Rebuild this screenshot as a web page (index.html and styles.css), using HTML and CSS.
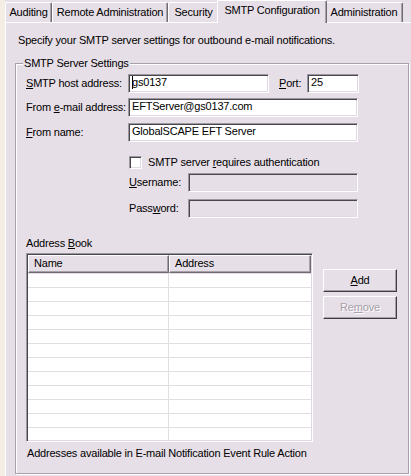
FILE: index.html
```html
<!DOCTYPE html>
<html>
<head>
<meta charset="utf-8">
<link rel="stylesheet" href="styles.css">
</head>
<body>
<div class="window">
  <div class="strip"></div>
  <div class="tabctl">
    <div class="tabs">
      <div class="tab t1">Auditing</div>
      <div class="tab t2">Remote Administration</div>
      <div class="tab t3">Security</div>
      <div class="tab sel">SMTP Configuration</div>
      <div class="tab t5">Administration</div>
    </div>
    <div class="panel">
      <div class="intro">Specify your SMTP server settings for outbound e-mail notifications.</div>
      <div class="group">
        <div class="legend">SMTP Server Settings</div>
        <div class="row r1">
          <span class="lbl"><u>S</u>MTP host address:</span>
          <div class="edit host"><span class="caret"></span>gs0137</div>
          <span class="portlbl"><u>P</u>ort:</span>
          <div class="edit port">25</div>
        </div>
        <div class="row r2">
          <span class="lbl">From <u>e</u>-mail address:</span>
          <div class="edit wide">EFTServer@gs0137.com</div>
        </div>
        <div class="row r3">
          <span class="lbl"><u>F</u>rom name:</span>
          <div class="edit wide">GlobalSCAPE EFT Server</div>
        </div>
        <div class="checkrow">
          <span class="check"></span>
          <span class="checklbl">SMTP server <u>r</u>equires authentication</span>
        </div>
        <div class="row sub r4">
          <span class="sublbl"><u>U</u>sername:</span>
          <div class="edit off"></div>
        </div>
        <div class="row sub r5">
          <span class="sublbl">Pass<u>w</u>ord:</span>
          <div class="edit off"></div>
        </div>
        <div class="abook">Address <u>B</u>ook</div>
        <div class="listarea">
          <div class="list">
            <div class="lhead">
              <div class="hcell hname">Name</div>
              <div class="hcell haddr">Address</div>
            </div>
            <div class="lrow"><div class="c1"></div><div class="c2"></div></div>
            <div class="lrow"><div class="c1"></div><div class="c2"></div></div>
            <div class="lrow"><div class="c1"></div><div class="c2"></div></div>
            <div class="lrow"><div class="c1"></div><div class="c2"></div></div>
            <div class="lrow"><div class="c1"></div><div class="c2"></div></div>
            <div class="lrow"><div class="c1"></div><div class="c2"></div></div>
            <div class="lrow"><div class="c1"></div><div class="c2"></div></div>
            <div class="lrow"><div class="c1"></div><div class="c2"></div></div>
            <div class="lrow"><div class="c1"></div><div class="c2"></div></div>
            <div class="lrow"><div class="c1"></div><div class="c2"></div></div>
            <div class="lrow"><div class="c1"></div><div class="c2"></div></div>
            <div class="lrow"><div class="c1"></div><div class="c2"></div></div>
          </div>
          <div class="buttons">
            <div class="btn"><u>A</u>dd</div>
            <div class="btn disabled">Re<u>m</u>ove</div>
          </div>
        </div>
        <div class="footer">Addresses available in E-mail Notification Event Rule Action</div>
      </div>
    </div>
  </div>
</div>
</body>
</html>
```
FILE: styles.css
```css
html, body {
  margin: 0;
  padding: 0;
}
body {
  background: #e7dfe7;
  font-family: "Liberation Sans", Arial, sans-serif;
  font-size: 11px;
  letter-spacing: -0.2px;
  line-height: 13px;
  color: #000;
  overflow: hidden;
}
u { text-decoration: underline; text-underline-offset: 1px; }

.window {
  display: flex;
  height: 476px;
  width: 411px;
  overflow: hidden;
}
.strip {
  width: 5px;
  flex: none;
  background: #f3ede3;
}
.tabctl {
  flex: 1;
  display: flex;
  flex-direction: column;
  min-width: 0;
}
.tabs {
  display: flex;
  align-items: flex-end;
  height: 22px;
  flex: none;
}
.tab {
  box-sizing: border-box;
  height: 20px;
  line-height: 18px;
  text-align: center;
  white-space: nowrap;
  border-top: 1px solid #fff;
  border-left: 1px solid #fff;
  border-right: 1px solid #6f6a70;
  border-radius: 2px 2px 0 0;
  box-shadow: inset -1px 0 0 #a7a1a9;
  background: #e7dfe7;
  flex: none;
}
.t1 { width: 47px; }
.t2 { width: 116px; }
.t3 { width: 51px; }
.t5 { width: 78px; }
.sel {
  width: 110px;
  height: 23px;
  line-height: 19px;
  margin: 0 -2px -1px -2px;
  position: relative;
  z-index: 1;
  padding-bottom: 3px;
}

.panel {
  flex: 1;
  border-top: 1px solid #fff;
  border-left: 1px solid #fff;
  padding-top: 11px;
}
.intro {
  line-height: 13px;
  padding-left: 12px;
  white-space: nowrap;
}
.group {
  box-sizing: border-box;
  margin: 16px 0 0 9px;
  width: 394px;
  height: 411px;
  border: 1px solid #a7a1a9;
  box-shadow: inset 1px 1px 0 #fff, 1px 1px 0 #fff;
  padding-left: 10px;
}
.legend {
  width: fit-content;
  line-height: 13px;
  margin: -7px 0 0 -3px;
  padding: 0 1px;
  background: #e7dfe7;
}
.row {
  display: flex;
  align-items: center;
  height: 19px;
}
.r1 { margin-top: 4px; }
.r2 { margin-top: 5px; }
.r3 { margin-top: 6px; }
.lbl {
  width: 102px;
  flex: none;
  white-space: nowrap;
}
.portlbl {
  width: 28px;
  margin-left: 10px;
  flex: none;
}
.edit {
  box-sizing: border-box;
  height: 19px;
  line-height: 15px;
  padding-left: 3px;
  background: #fff;
  border-top: 1px solid #9d97a0;
  border-left: 1px solid #9d97a0;
  border-right: 1px solid #fff;
  border-bottom: 1px solid #fff;
  box-shadow: inset 1px 1px 0 #4a464d, inset -1px -1px 0 #e0d8e2;
  white-space: nowrap;
  flex: none;
}
.host { width: 141px; }
.port { width: 52px; }
.wide { width: 230px; }
.off { width: 170px; background: #e7dfe7; }
.caret {
  display: inline-block;
  width: 1px;
  height: 13px;
  background: #000;
  vertical-align: -3px;
  margin-right: -1px;
}

.checkrow {
  display: flex;
  align-items: center;
  height: 13px;
  margin-top: 14px;
  padding-left: 103px;
}
.check {
  box-sizing: border-box;
  width: 13px;
  height: 13px;
  background: #fff;
  border-top: 1px solid #9d97a0;
  border-left: 1px solid #9d97a0;
  border-right: 1px solid #fff;
  border-bottom: 1px solid #fff;
  box-shadow: inset 1px 1px 0 #4a464d, inset -1px -1px 0 #e0d8e2;
  flex: none;
}
.checklbl {
  margin-left: 6px;
  white-space: nowrap;
}
.sub { padding-left: 103px; }
.r4 { margin-top: 4px; }
.r5 { margin-top: 7px; }
.sublbl {
  width: 59px;
  flex: none;
  white-space: nowrap;
}

.abook {
  line-height: 13px;
  margin-top: 19px;
}
.listarea {
  display: flex;
  margin-top: 3px;
}
.list {
  box-sizing: border-box;
  width: 287px;
  height: 189px;
  background: #fff;
  border-top: 1px solid #9d97a0;
  border-left: 1px solid #9d97a0;
  border-right: 1px solid #fff;
  border-bottom: 1px solid #fff;
  box-shadow: inset 1px 1px 0 #4a464d, inset -1px -1px 0 #e0d8e2;
  padding: 1px 1px 0 1px;
  overflow: hidden;
  flex: none;
}
.lhead {
  display: flex;
  height: 18px;
}
.hcell {
  box-sizing: border-box;
  height: 18px;
  line-height: 15px;
  padding-left: 5px;
  background: #e7dfe7;
  border-top: 1px solid #fff;
  border-left: 1px solid #fff;
  border-right: 1px solid #6f6a70;
  border-bottom: 1px solid #6f6a70;
  box-shadow: inset -1px -1px 0 #a7a1a9;
}
.hname { width: 141px; }
.haddr { flex: 1; }
.lrow {
  display: flex;
  height: 14px;
  box-sizing: border-box;
  border-top: 1px solid #e2dde3;
}
.c1 {
  width: 141px;
  border-right: 1px solid #e2dde3;
  box-sizing: border-box;
}
.c2 { flex: 1; }

.buttons {
  display: flex;
  flex-direction: column;
  gap: 4px;
  margin: 16px 0 0 10px;
}
.btn {
  box-sizing: border-box;
  width: 74px;
  height: 23px;
  line-height: 20px;
  text-align: center;
  background: #e7dfe7;
  border-top: 1px solid #fff;
  border-left: 1px solid #fff;
  border-right: 1px solid #3f3b40;
  border-bottom: 1px solid #3f3b40;
  box-shadow: inset -1px -1px 0 #a7a1a9;
}
.disabled {
  color: #a7a1a9;
  text-shadow: 1px 1px 0 #fff;
}
.footer {
  line-height: 13px;
  margin-top: 5px;
  padding-left: 1px;
  white-space: nowrap;
}
```
